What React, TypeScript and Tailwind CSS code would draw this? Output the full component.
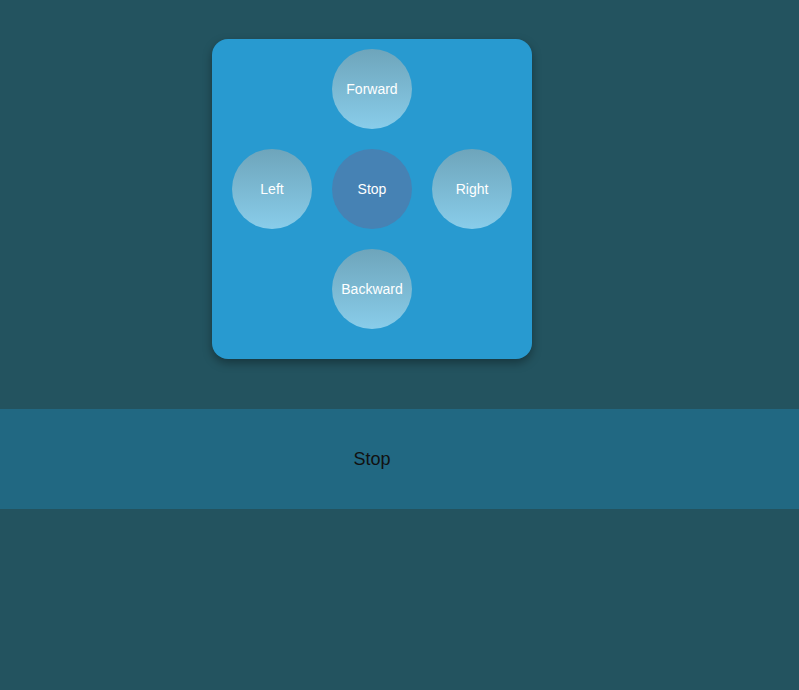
import React, { useState } from 'react';

const Pad = ({ label, onClick, active }: { label: string; onClick: () => void; active?: boolean }) => (
  <button
    onClick={onClick}
    className={
      active
        ? 'w-20 h-20 rounded-full bg-[#4682b4] text-white text-sm flex items-center justify-center'
        : 'w-20 h-20 rounded-full bg-gradient-to-b from-[#6ea5bb] to-[#89cdea] text-white text-sm flex items-center justify-center'
    }
  >
    {label}
  </button>
);

export default function App() {
  const [cmd, setCmd] = useState('Stop');

  return (
    <div className="min-h-[690px] bg-[#23535f] pt-[39px] font-['Liberation_Sans',Arial,sans-serif]">
      <div className="ml-[212px] w-[320px] h-[320px] rounded-2xl bg-[#289ad0] shadow-[0_4px_10px_rgba(0,0,0,0.35)] pt-[10px] px-5">
        <div className="grid grid-cols-[80px_80px_80px] grid-rows-[80px_80px_80px] gap-5">
          <div />
          <Pad label="Forward" onClick={() => setCmd('Forward')} />
          <div />
          <Pad label="Left" onClick={() => setCmd('Left')} />
          <Pad label="Stop" active onClick={() => setCmd('Stop')} />
          <Pad label="Right" onClick={() => setCmd('Right')} />
          <div />
          <Pad label="Backward" onClick={() => setCmd('Backward')} />
          <div />
        </div>
      </div>

      <div className="mt-[50px] h-[100px] bg-[#216882] flex items-center">
        <div className="ml-[212px] w-[320px] text-center text-lg text-[#111]">{cmd}</div>
      </div>
    </div>
  );
}
